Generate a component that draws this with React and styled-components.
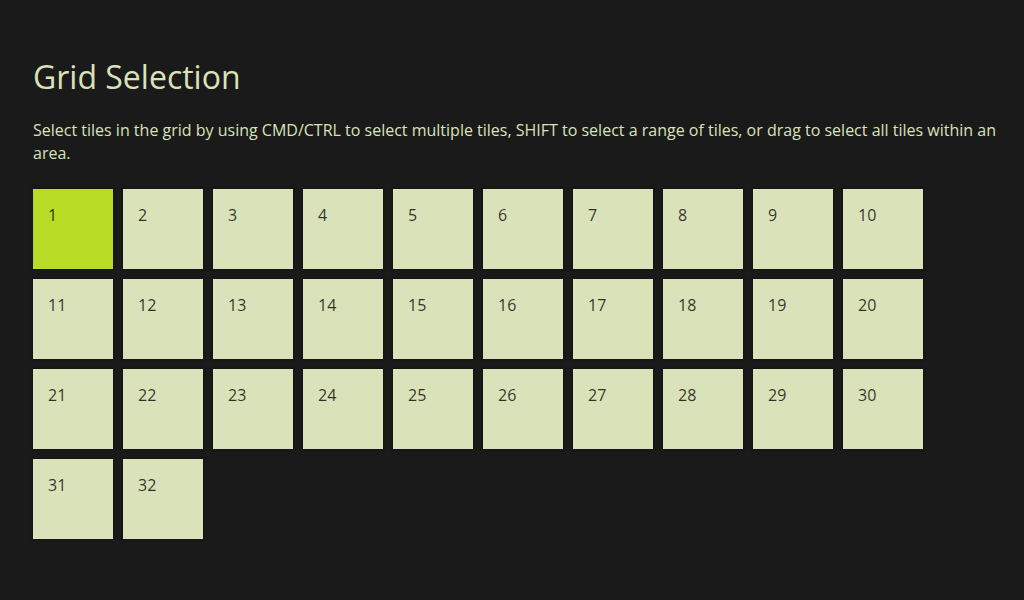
import React from "react";
import styled, { createGlobalStyle } from "styled-components";

const Global = createGlobalStyle`
  html, body { margin: 0; padding: 0; background: #1a1a1a; }
  body { font-family: "Open Sans", "DejaVu Sans", sans-serif; }
`;

const Page = styled.main`
  padding: 55px 24px 40px 33px;
  color: #d9e2b8;
`;

const Title = styled.h1`
  margin: 0;
  font-size: 32px;
  line-height: 44px;
  font-weight: 400;
`;

const Intro = styled.p`
  margin: 20px 0 0;
  font-size: 16px;
  line-height: 23px;
`;

const Grid = styled.div`
  margin-top: 24px;
  display: grid;
  grid-template-columns: repeat(10, 80px);
  gap: 10px;
`;

const Tile = styled.div`
  width: 80px;
  height: 80px;
  box-sizing: border-box;
  padding: 15px 15px;
  background: ${(p) => (p.$selected ? "#b8dc26" : "#d9e2b8")};
  color: rgba(0, 0, 0, 0.78);
  font-size: 16px;
  line-height: 22px;
  box-shadow: 0 0 3px rgba(0, 0, 0, 0.6);
`;

export default function App() {
  const tiles = Array.from({ length: 32 }, (_, i) => i + 1);
  return (
    <>
      <Global />
      <Page>
        <Title>Grid Selection</Title>
        <Intro>
          Select tiles in the grid by using CMD/CTRL to select multiple tiles, SHIFT to select a range of tiles, or drag to select all tiles within an area.
        </Intro>
        <Grid>
          {tiles.map((n) => (
            <Tile key={n} $selected={n === 1}>
              {n}
            </Tile>
          ))}
        </Grid>
      </Page>
    </>
  );
}
